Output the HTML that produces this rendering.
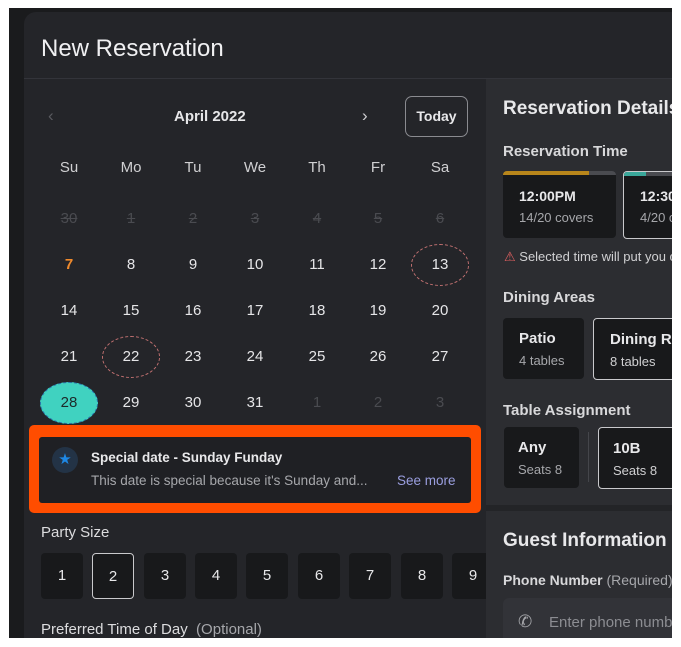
<!DOCTYPE html>
<html><head><style>
*{margin:0;padding:0;box-sizing:border-box}
body{width:681px;height:647px;background:#fff;position:relative;overflow:hidden;font-family:"Liberation Sans",sans-serif;color:#e8e8ea}
#scr{position:absolute;left:9px;top:8px;width:663px;height:630px;background:#1a1b1d;overflow:hidden}
#panel{position:absolute;left:15px;top:4px;width:660px;height:640px;background:#242529;border-radius:12px 0 0 0;overflow:hidden}
.a{position:absolute;white-space:nowrap}
.n{position:absolute;width:58px;text-align:center;font-size:15px;color:#e6e6e8}
.ps{position:absolute;top:541px;width:42px;height:46px;background:#18191b;border-radius:4px;text-align:center;line-height:46px;font-size:15px}
.card{position:absolute;background:#18191b;border-radius:4px}
.sel{border:1.5px solid #c9c9cc}
#right{position:absolute;left:462px;top:67px;width:200px;height:580px;background:#2c2d31;z-index:5}
</style></head><body>
<div id="scr">
<div id="panel">
 <div class="a" style="left:17px;top:23px;font-size:24px;color:#f0f0f2">New Reservation</div>
 <div class="a" style="left:0;top:66px;width:660px;height:1px;background:#33343a"></div>
 <div class="a" style="left:24px;top:94px;font-size:17px;color:#5a5b60">‹</div>
 <div class="a" style="left:150px;top:96px;font-size:15px;font-weight:bold;color:#e6e6e8">April 2022</div>
 <div class="a" style="left:338px;top:94px;font-size:17px;color:#d0d0d2">›</div>
 <div class="a" style="left:381px;top:84px;width:63px;height:41px;border:1.5px solid #8a8b90;border-radius:7px;text-align:center;line-height:38px;font-size:14px;font-weight:bold">Today</div>
 <div id="cal"></div>
 <div class="a" style="left:5px;top:413px;width:452px;height:88px;background:#ff4d00;border-radius:5px"></div>
 <div class="a" style="left:15px;top:425px;width:432px;height:66px;background:#1f2024;border-radius:3px"></div>
 <div class="a" style="left:28px;top:435px;width:26px;height:26px;border-radius:50%;background:#233346;text-align:center;line-height:25px;color:#1e88e5;font-size:15px">★</div>
 <div class="a" style="left:67px;top:438px;font-size:13.5px;font-weight:bold">Special date - Sunday Funday</div>
 <div class="a" style="left:67px;top:461px;font-size:13.5px;color:#a6a7ab">This date is special because it's Sunday and...</div>
 <div class="a" style="left:373px;top:461px;font-size:13.5px;color:#9b9fe0">See more</div>
 <div class="a" style="left:17px;top:512px;font-size:15px;color:#dcdcde">Party Size</div>
 <div class="ps" style="left:17px">1</div>
 <div class="ps sel" style="left:68px">2</div>
 <div class="ps" style="left:120px">3</div>
 <div class="ps" style="left:171px">4</div>
 <div class="ps" style="left:222px">5</div>
 <div class="ps" style="left:274px">6</div>
 <div class="ps" style="left:325px">7</div>
 <div class="ps" style="left:377px">8</div>
 <div class="ps" style="left:428px">9</div>
 <div class="a" style="left:17px;top:609px;font-size:15px;color:#dcdcde">Preferred Time of Day <span style="color:#a6a7ab">&nbsp;(Optional)</span></div>
 <div id="right">
 <div class="a" style="left:0;top:426px;width:200px;height:6px;background:#232427"></div>
 <div class="a" style="left:17px;top:19px;font-size:19px;font-weight:bold">Reservation Details</div>
 <div class="a" style="left:17px;top:64px;font-size:15px;font-weight:bold;color:#d8d8da">Reservation Time</div>
 <div class="card" style="left:17px;top:92px;width:113px;height:67px;overflow:hidden">
  <div class="a" style="left:0;top:0;width:113px;height:4px;background:#4a4b50"></div>
  <div class="a" style="left:0;top:0;width:86px;height:4px;background:#b8861b"></div>
  <div class="a" style="left:16px;top:17px;font-size:14px;font-weight:bold">12:00PM</div>
  <div class="a" style="left:16px;top:39px;font-size:13px;color:#a6a7ab">14/20 covers</div>
 </div>
 <div class="card sel" style="left:137px;top:92px;width:80px;height:68px;overflow:hidden">
  <div class="a" style="left:0;top:0;width:80px;height:4px;background:#4a4b50"></div>
  <div class="a" style="left:0;top:0;width:22px;height:4px;background:#3aa79a"></div>
  <div class="a" style="left:16px;top:16px;font-size:14px;font-weight:bold">12:30PM</div>
  <div class="a" style="left:16px;top:38px;font-size:13px;color:#a6a7ab">4/20 covers</div>
 </div>
 <div class="a" style="left:18px;top:170px;font-size:13px;color:#d0d0d2"><span style="color:#e06060">⚠</span> Selected time will put you over</div>
 <div class="a" style="left:17px;top:210px;font-size:15px;font-weight:bold;color:#d8d8da">Dining Areas</div>
 <div class="card" style="left:17px;top:239px;width:81px;height:61px">
  <div class="a" style="left:16px;top:12px;font-size:15px;font-weight:bold">Patio</div>
  <div class="a" style="left:16px;top:35px;font-size:13px;color:#a6a7ab">4 tables</div></div>
 <div class="card sel" style="left:107px;top:239px;width:100px;height:62px">
  <div class="a" style="left:16px;top:12px;font-size:15px;font-weight:bold">Dining Room</div>
  <div class="a" style="left:16px;top:35px;font-size:13px;color:#d0d0d2">8 tables</div></div>
 <div class="a" style="left:17px;top:323px;font-size:15px;font-weight:bold;color:#d8d8da">Table Assignment</div>
 <div class="card" style="left:18px;top:348px;width:75px;height:61px">
  <div class="a" style="left:14px;top:12px;font-size:15px;font-weight:bold">Any</div>
  <div class="a" style="left:14px;top:35px;font-size:13px;color:#a6a7ab">Seats 8</div></div>
 <div class="a" style="left:102px;top:353px;width:1px;height:50px;background:#45464b"></div>
 <div class="card sel" style="left:112px;top:348px;width:90px;height:62px">
  <div class="a" style="left:14px;top:12px;font-size:15px;font-weight:bold">10B</div>
  <div class="a" style="left:14px;top:35px;font-size:13px;color:#d0d0d2">Seats 8</div></div>
 <div class="a" style="left:17px;top:451px;font-size:19px;font-weight:bold">Guest Information</div>
 <div class="a" style="left:17px;top:493px;font-size:14px;font-weight:bold;color:#d8d8da">Phone Number <span style="font-weight:normal;color:#a6a7ab">(Required)</span></div>
 <div class="a" style="left:17px;top:519px;width:200px;height:50px;background:#323338;border-radius:6px"></div>
 <div class="a" style="left:32px;top:533px;font-size:17px;color:#a6a7ab">✆</div>
 <div class="a" style="left:63px;top:535px;font-size:15px;color:#8c8d92">Enter phone number</div>
 </div>
</div>
</div>
<script>
var c=document.getElementById('cal'),h='';
var xs=[45,107,169,231,293,354,416],hd=['Su','Mo','Tu','We','Th','Fr','Sa'];
for(var i=0;i<7;i++)h+='<div class="n" style="left:'+(xs[i]-29)+'px;top:147px;color:#d0d0d2">'+hd[i]+'</div>';
var rows=[[30,1,2,3,4,5,6],[7,8,9,10,11,12,13],[14,15,16,17,18,19,20],[21,22,23,24,25,26,27],[28,29,30,31,1,2,3]];
var ys=[207,253,299,345,391];
for(var r=0;r<5;r++)for(var i=0;i<7;i++){
 var v=rows[r][i],st='',ty=ys[r]-9;
 if(r==0)st='color:#4a4b50;text-decoration:line-through;';
 if(r==4&&i>3)st='color:#4a4b50;';
 if(r==1&&i==0)st='color:#f08a2c;font-weight:bold;';
 if((r==1&&i==6)||(r==3&&i==1))h+='<div class="a" style="left:'+(xs[i]-29)+'px;top:'+(ys[r]-21)+'px;width:58px;height:42px;border:1.5px dashed #c07070;border-radius:50%"></div>';
 if(r==4&&i==0){h+='<div class="a" style="left:'+(xs[i]-29)+'px;top:'+(ys[r]-21)+'px;width:58px;height:42px;background:#40d2c0;border:1.5px dashed #2a7ab0;border-radius:50%"></div>';st='color:#1d2a2a;';}
 h+='<div class="n" style="left:'+(xs[i]-29)+'px;top:'+ty+'px;'+st+'">'+v+'</div>';
}
c.innerHTML=h;
</script>
</body></html>
